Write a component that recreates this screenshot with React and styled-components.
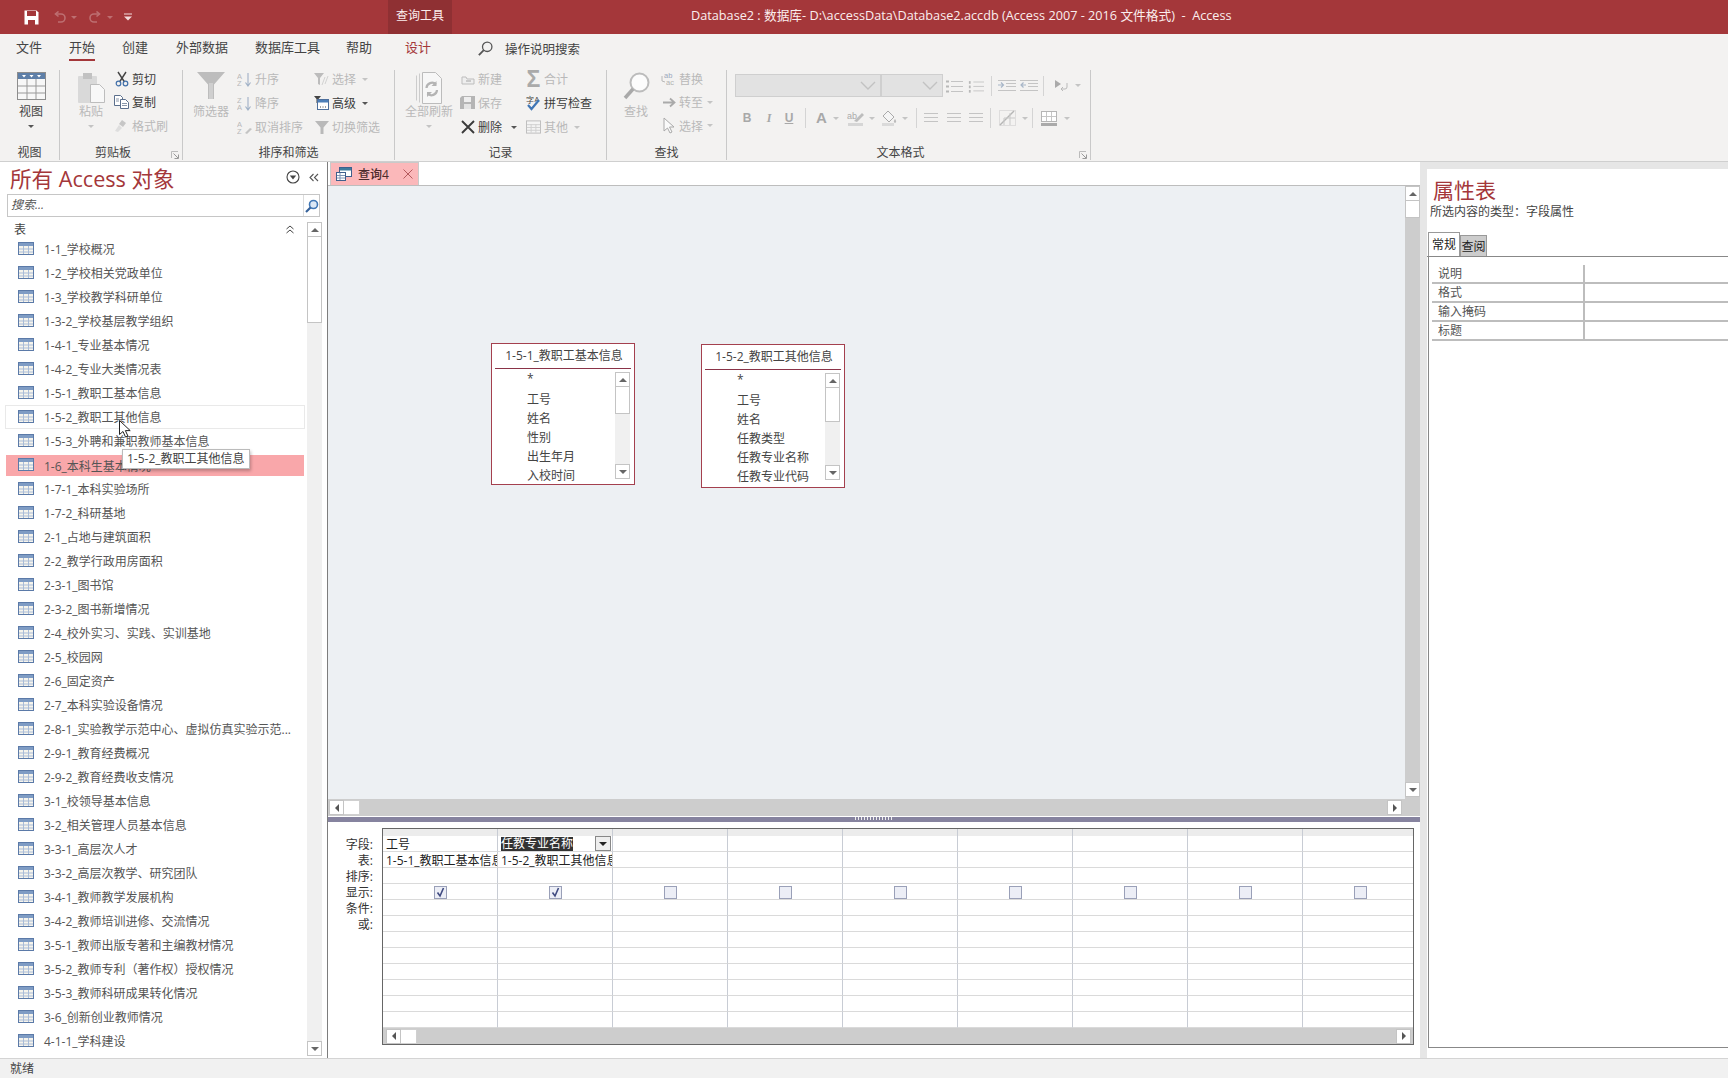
import React from 'react';
import styled, { createGlobalStyle } from 'styled-components';

const GlobalStyle = createGlobalStyle`
  html, body { margin: 0; padding: 0; background: #fff; }
  body { font-family: "Open Sans", "Noto Sans CJK SC", sans-serif; font-size: 12px; color: #444; }
  * { box-sizing: border-box; }
`;

const tables = [
  '1-1_学校概况', '1-2_学校相关党政单位', '1-3_学校教学科研单位', '1-3-2_学校基层教学组织', '1-4-1_专业基本情况',
  '1-4-2_专业大类情况表', '1-5-1_教职工基本信息', '1-5-2_教职工其他信息', '1-5-3_外聘和兼职教师基本信息', '1-6_本科生基本情况',
  '1-7-1_本科实验场所', '1-7-2_科研基地', '2-1_占地与建筑面积', '2-2_教学行政用房面积', '2-3-1_图书馆', '2-3-2_图书新增情况',
  '2-4_校外实习、实践、实训基地', '2-5_校园网', '2-6_固定资产', '2-7_本科实验设备情况', '2-8-1_实验教学示范中心、虚拟仿真实验示范...',
  '2-9-1_教育经费概况', '2-9-2_教育经费收支情况', '3-1_校领导基本信息', '3-2_相关管理人员基本信息', '3-3-1_高层次人才',
  '3-3-2_高层次教学、研究团队', '3-4-1_教师教学发展机构', '3-4-2_教师培训进修、交流情况', '3-5-1_教师出版专著和主编教材情况',
  '3-5-2_教师专利\uff08著作权\uff09授权情况', '3-5-3_教师科研成果转化情况', '3-6_创新创业教师情况', '4-1-1_学科建设',
];

const gray = '#b9b9b9';

/* page */
const Page = styled.div`
  width: 1728px; height: 1080px; display: flex; flex-direction: column; overflow: hidden; background: #fff;
`;

/* title bar */
const TitleBar = styled.div`
  height: 34px; background: #a4373a; display: flex; align-items: center; color: #fbeeee; flex: none;
`;
const Qat = styled.div`
  width: 388px; display: flex; align-items: center; padding-left: 24px;
`;
const QatSlot = styled.span`
  display: inline-flex; align-items: center; margin-right: ${p => p.$mr || 0}px;
`;
const ContextTab = styled.div`
  width: 64px; height: 34px; background: #8f3033; display: flex; align-items: center; justify-content: center; font-size: 12px; padding-bottom: 5px;
`;
const WindowTitle = styled.div`
  margin-left: 239px; font-size: 12.7px; white-space: pre; padding-bottom: 5px;
`;

/* ribbon */
const TabRow = styled.div`
  height: 28px; background: #f3f2f1; display: flex; flex: none; padding-left: 16px;
`;
const RibbonTab = styled.div`
  height: 28px; margin-right: ${p => p.$mr}px; font-size: 13px; line-height: 27px; position: relative;
  color: ${p => (p.$accent ? '#a4373a' : '#444')};
  &::after {
    content: ''; display: ${p => (p.$on ? 'block' : 'none')}; position: absolute; left: 0; right: 0; bottom: 1px; height: 2px; background: #a4373a;
  }
`;
const SearchHint = styled.div`
  display: flex; align-items: center; gap: 12px; height: 28px; font-size: 12.5px; color: #444;
`;
const RibbonBody = styled.div`
  height: 100px; background: #f3f2f1; border-bottom: 1px solid #cfcfcf; display: flex; flex: none; padding-top: 8px;
`;
const Group = styled.div`
  width: ${p => p.$w}px; height: 90px; border-right: 1px solid #c9c9c9; display: flex; flex-direction: column; position: relative; flex: none;
`;
const GroupBody = styled.div`
  height: 75px; display: flex; padding-left: ${p => p.$pl}px;
`;
const GroupLabel = styled.div`
  text-align: center; height: 15px; line-height: 15px; font-size: 12px; color: #444; padding-right: ${p => p.$shift || 0}px;
`;
const Launcher = styled.span`
  position: absolute; right: 3px; bottom: 1px; line-height: 0;
`;
const BigButton = styled.div`
  width: ${p => p.$w}px; display: flex; flex-direction: column; align-items: center; color: ${p => (p.$off ? gray : '#444')}; flex: none;
`;
const BigIcon = styled.div`
  height: 34px; padding-top: 2px; line-height: 0;
`;
const BigText = styled.div`
  height: 16px; line-height: 16px; white-space: nowrap; font-size: 12px;
`;
const Caret = styled.i`
  display: inline-block; width: 0; height: 0; flex: none;
  border-left: 3px solid transparent; border-right: 3px solid transparent;
  border-top: 3px solid ${p => p.$c || '#777'};
  margin: ${p => p.$m || '0'};
`;
const SmallCol = styled.div`
  width: ${p => p.$w}px; margin-left: ${p => p.$ml || 0}px; margin-top: -3px; flex: none;
`;
const SmallRow = styled.div`
  height: ${p => p.$h || 24}px; display: flex; align-items: center; color: ${p => (p.$off ? gray : '#3c3c3c')}; white-space: nowrap;
`;
const SmallIcon = styled.span`
  width: 15px; margin-right: 3px; display: flex; justify-content: center; line-height: 0; flex: none;
`;
const SumGlyph = styled.span`
  font-family: "Liberation Sans", sans-serif; font-size: 23px; line-height: 14px; font-weight: 700; color: #aaa;
`;
const FormatBody = styled.div`
  padding: 4px 0 0 8px; height: 75px;
`;
const ToolRow = styled.div`
  display: flex; align-items: center; height: ${p => p.$h}px; margin-bottom: ${p => p.$mb || 0}px;
`;
const Combo = styled.div`
  width: ${p => p.$w}px; height: 23px; background: #e2e2e2; border: 1px solid #cfcfcf; display: flex; align-items: center; justify-content: flex-end; padding-right: 4px; flex: none;
`;
const Tool = styled.span`
  width: ${p => p.$w}px; margin-left: ${p => p.$ml || 0}px; display: flex; justify-content: center; align-items: center; line-height: 0; flex: none;
`;
const FontGlyph = styled.span`
  font-family: ${p => (p.$serif ? '"Liberation Serif"' : '"Liberation Sans"')}; font-size: ${p => p.$size || 12}px; line-height: 14px;
  font-weight: 700; font-style: ${p => (p.$i ? 'italic' : 'normal')}; text-decoration: ${p => (p.$u ? 'underline' : 'none')}; color: #a8a8a8;
`;
const ToolSep = styled.span`
  width: 1px; height: 20px; background: #d4d4d4; margin-left: ${p => p.$ml}px; flex: none;
`;

/* main area */
const Main = styled.div`
  height: 896px; display: flex; flex: none;
`;

/* navigation pane */
const Nav = styled.div`
  width: 328px; border-right: 1px solid #7d7d7d; position: relative; flex: none; background: #fff;
`;
const NavHead = styled.div`
  height: 32px; display: flex; align-items: center; padding: 0 8px 2px 10px; gap: 9px;
`;
const NavTitle = styled.div`
  flex: 1; font-size: 21.6px; color: #a4373a; white-space: nowrap;
`;
const NavSearch = styled.div`
  height: 23px; margin: 0 7px; border: 1px solid #c6c6c6; display: flex; align-items: center; padding: 0 0 0 3px; font-style: italic; color: #555;
`;
const SearchText = styled.span` flex: 1; padding-bottom: 3px; `;
const SearchBtn = styled.span`
  width: 16px; height: 21px; border-left: 1px solid #dcdcdc; display: flex; align-items: center; justify-content: center;
`;
const NavBody = styled.div`
  display: flex; margin-top: 5px; height: 836px;
`;
const NavList = styled.div`
  width: 307px; flex: none;
`;
const SectionHead = styled.div`
  height: 15px; line-height: 15px; padding: 0 13px 0 14px; display: flex; justify-content: space-between; align-items: center; color: #444;
`;
const Row = styled.div`
  height: 24px; width: 300px; margin-left: 5px; display: flex; align-items: center; padding-left: 12px; gap: 10px; white-space: nowrap; color: #555;
  border: 1px solid ${p => (p.$hover ? '#e9e9e9' : 'transparent')};
  border-top-width: ${p => (p.$sel ? '2px' : '1px')};
  background: ${p => (p.$sel ? '#f9a7aa' : 'transparent')};
  background-clip: padding-box;
  svg { margin-top: -2px; }
`;
const Tip = styled.div`
  position: absolute; left: 122px; top: 287px; height: 20px; line-height: 17px; padding: 0 4px; background: #fff; border: 1px solid #bbb;
  box-shadow: 1px 2px 3px rgba(0,0,0,.25); color: #444; white-space: nowrap;
`;
const Pointer = styled.span`
  position: absolute; left: 119px; top: 258px; line-height: 0;
`;

/* scrollbars */
const VBar = styled.div`
  width: ${p => p.$w || 15}px; height: ${p => p.$h ? `${p.$h}px` : 'auto'}; background: ${p => p.$track || '#f0f0f0'}; display: flex; flex-direction: column; justify-content: space-between; flex: none;
  margin-top: ${p => p.$mt || 0}px;
`;
const ScrollTop = styled.div` display: flex; flex-direction: column; `;
const ArrowBtn = styled.div`
  width: ${p => p.$w || 15}px; height: ${p => p.$h || 15}px; background: #fff; border: 1px solid #c4c4c4; display: flex; align-items: center; justify-content: center; flex: none;
`;
const Up = styled.i`
  width: 0; height: 0; border-left: 4px solid transparent; border-right: 4px solid transparent; border-bottom: 4px solid #666;
`;
const Down = styled.i`
  width: 0; height: 0; border-left: 4px solid transparent; border-right: 4px solid transparent; border-top: 4px solid ${p => p.$c || '#666'};
`;
const LeftTri = styled.i`
  width: 0; height: 0; border-top: 4px solid transparent; border-bottom: 4px solid transparent; border-right: 4px solid #555;
`;
const RightTri = styled.i`
  width: 0; height: 0; border-top: 4px solid transparent; border-bottom: 4px solid transparent; border-left: 4px solid #555;
`;
const VThumb = styled.div`
  height: ${p => p.$h}px; background: #fff; border: 1px solid #c4c4c4; border-top: none;
`;
const HBar = styled.div`
  height: ${p => p.$h}px; background: #cdcdcd; display: flex; justify-content: space-between; align-items: center; padding: ${p => p.$pad || '0'}; flex: none;
`;
const HLeft = styled.div` display: flex; `;
const HThumb = styled.div`
  width: 16px; height: 15px; background: #fff; border: 1px solid #d0d0d0; border-left: none;
`;

/* document */
const Doc = styled.div`
  width: 1092px; display: flex; flex-direction: column; flex: none;
`;
const DocTabs = styled.div`
  height: 24px; border-bottom: 1px solid #bdbdbd; padding-left: 2px; flex: none;
`;
const DocTab = styled.div`
  width: 89px; height: 23px; background: #fbb8ba; border: 1px solid #c9c9c9; border-bottom: none; display: flex; align-items: center; padding: 0 5px; color: #4a2a2a;
`;
const DocTabName = styled.span` flex: 1; margin-left: 6px; font-weight: 500; `;
const Upper = styled.div`
  height: 630px; display: flex; flex-direction: column; flex: none;
`;
const UpperTop = styled.div`
  height: 613px; display: flex; flex: none; background: #cdcdcd;
`;
const Canvas = styled.div`
  flex: 1; position: relative; background: #edf0f3;
`;
const FieldList = styled.div`
  position: absolute; left: ${p => p.$x}px; top: ${p => p.$y}px; width: 144px; height: ${p => p.$h}px;
  background: #fff; border: 1px solid #a4404e; overflow: hidden;
`;
const FieldHead = styled.div`
  height: 25px; margin: 0 3px; border-bottom: 1px solid #8a3348; text-align: center; line-height: 23px; color: #444; padding-left: 2px; white-space: nowrap;
`;
const FieldBody = styled.div`
  display: flex; height: 118px;
`;
const FieldItems = styled.div`
  width: 123px; padding: 0 0 0 35px; flex: none;
`;
const FieldItem = styled.div`
  height: 19px; line-height: 19px; color: #444; white-space: nowrap; margin-bottom: ${p => p.$mb || 0}px;
`;
const Splitter = styled.div`
  height: 6px; background: #86839f; border-top: 1px solid #fff; flex: none; display: flex; justify-content: center;
`;
const Dots = styled.div`
  width: 38px; height: 3px; background: repeating-linear-gradient(90deg, #eee 0 1px, transparent 1px 3px);
`;
const Lower = styled.div`
  flex: 1; display: flex; background: #fff;
`;
const RowLabels = styled.div`
  width: 54px; padding: 15px 9px 0 0; text-align: right; flex: none;
`;
const RowLabel = styled.div`
  height: 16px; line-height: 16px; color: #333;
`;
const DesignGrid = styled.div`
  width: 1032px; height: 217px; margin-top: 6px; border: 1px solid #666; overflow: hidden; display: flex; flex-direction: column; flex: none;
`;
const Selector = styled.div`
  height: 7px; background: #ececec; display: grid; grid-template-columns: repeat(9, 115px); flex: none;
`;
const SelectorCell = styled.div` border-right: 1px solid #c8ccd4; `;
const Cells = styled.div`
  display: grid; grid-template-columns: repeat(9, 115px); grid-auto-rows: 16px; height: 192px; flex: none;
`;
const Cell = styled.div`
  border-right: 1px solid #c8ccd4; border-bottom: 1px solid #dadada; padding: 1px 0 0 ${p => p.$pl ?? 3}px; line-height: 15px; color: #222; white-space: nowrap; overflow: hidden;
  display: flex; align-items: center; justify-content: ${p => (p.$center ? 'center' : 'flex-start')}; font-size: 12px; position: relative;
`;
const Picked = styled.span`
  background: #333; color: #fff; line-height: 14px;
`;
const DropBtn = styled.span`
  position: absolute; right: 1px; top: 0; width: 16px; height: 15px; background: #eee; border: 1px solid #888; display: flex; align-items: center; justify-content: center;
`;
const Check = styled.span`
  width: 13px; height: 13px; border: 1px solid #9aa0b8; background: #eceef6; display: flex; align-items: center; justify-content: center; line-height: 0;
`;

/* property sheet */
const Sheet = styled.div`
  flex: 1; background: #e6e6e6; padding: 7px 0 0 7px; display: flex;
`;
const SheetInner = styled.div`
  flex: 1; background: #fff; display: flex; flex-direction: column;
`;
const SheetTitle = styled.div`
  font-size: 21px; line-height: 28px; color: #a4373a; padding: 7px 0 0 6px;
`;
const SheetType = styled.div`
  line-height: 16px; padding-left: 3px; color: #444;
`;
const SheetTabs = styled.div`
  display: flex; align-items: flex-end; height: 24px; margin-top: 13px; border-bottom: 1px solid #888; padding-left: 1px; flex: none;
`;
const SheetTab = styled.div`
  height: ${p => (p.$on ? 24 : 21)}px; width: ${p => (p.$on ? 32 : 27)}px; background: ${p => (p.$on ? '#fff' : '#ccc')};
  border: 1px solid #999; border-bottom: none; line-height: ${p => (p.$on ? 24 : 21)}px; text-align: center; color: #222;
`;
const SheetPane = styled.div`
  margin-left: 1px; height: 791px; border-left: 1px solid #888; border-bottom: 1px solid #888; padding: 8px 0 0 3px; flex: none;
`;
const PropRow = styled.div`
  height: 19px; display: flex; border-bottom: 2px solid #bdbdbd;
`;
const PropName = styled.div`
  width: 153px; padding-left: 6px; line-height: 17px; border-right: 2px solid #bdbdbd; color: #555;
`;

/* status */
const Status = styled.div`
  height: 20px; background: #f1f1f1; border-top: 1px solid #d4d4d4; line-height: 19px; padding-left: 10px; color: #444; flex: none;
`;

/* icons */
const Svg = ({ w, h, children }) => (
  <svg width={w} height={h} viewBox={`0 0 ${w} ${h}`} fill="none">{children}</svg>
);

const TableIcon = () => (
  <Svg w={16} h={13}>
    <rect x=".5" y=".5" width="15" height="12" fill="#f6f4ec" stroke="#5b7aa8" />
    <rect x="1" y="1" width="14" height="3" fill="#7f9cc4" />
    <path d="M1 7h14M1 10h14M5.5 4v8M10.5 4v8" stroke="#a9bcd8" />
  </Svg>
);
const SaveIcon = () => (
  <Svg w={15} h={15}>
    <path d="M.5.5h12l2 2v12H.5z" fill="#fff" />
    <rect x="3" y="1" width="9" height="5" fill="#a4373a" />
    <rect x="4" y="10" width="7" height="5" fill="#a4373a" />
  </Svg>
);
const UndoIcon = ({ flip }) => (
  <Svg w={15} h={13}>
    <g transform={flip ? 'translate(15 0) scale(-1 1)' : undefined} stroke="#bd6f71" strokeWidth="1.6">
      <path d="M4 3h5a4 4 0 0 1 0 8H6" />
      <path d="M6.5 .5 3.5 3l3 2.5" />
    </g>
  </Svg>
);
const Customize = () => (
  <Svg w={8} h={8}>
    <path d="M0 1h8" stroke="#f3dcdc" />
    <path d="M0 3.5h8L4 7.5z" fill="#f3dcdc" />
  </Svg>
);
const Glass = ({ s = 14, c = '#555', sw = 1.2 }) => (
  <svg width={s} height={s} viewBox="0 0 14 14" fill="none">
    <circle cx="8.6" cy="5.4" r="4.4" stroke={c} strokeWidth={sw} />
    <path d="M5.4 8.6.8 13.2" stroke={c} strokeWidth={sw + .5} />
  </svg>
);
const ViewIcon = () => (
  <Svg w={29} h={28}>
    <rect x=".5" y=".5" width="28" height="27" fill="#f7f7f7" stroke="#8d8d8d" />
    <rect x="1" y="1" width="27" height="6" fill="#5e7fa8" />
    <path d="M5 3h4L7 5.5zM12.5 3h4l-2 2.5zM20 3h4l-2 2.5z" fill="#fff" />
    <path d="M1 14h27M1 21h27M10 7v20M19 7v20" stroke="#999" />
  </Svg>
);
const PasteIcon = () => (
  <Svg w={29} h={32}>
    <rect x="1" y="4" width="19" height="27" rx="1" fill="#d9d9d9" />
    <rect x="6" y="1" width="9" height="6" fill="#c2c2c2" />
    <path d="M13.5 12.5h9l5 5v13h-14z" fill="#f8f8f8" stroke="#bdbdbd" />
  </Svg>
);
const Scissors = () => (
  <Svg w={14} h={16}>
    <path d="M3 1l6.5 10M11 1 4.500 11" stroke="#444" strokeWidth="1.4" />
    <circle cx="3.500" cy="12.500" r="2.300" stroke="#3f6ea8" strokeWidth="1.200" />
    <circle cx="10.500" cy="12.500" r="2.300" stroke="#3f6ea8" strokeWidth="1.200" />
  </Svg>
);
const CopyIcon = () => (
  <Svg w={15} h={14}>
    <path d="M.5.5h6l2 2v8h-8z" fill="#fff" stroke="#5b6f8c" />
    <path d="M6.500 4.500h5l3 3v6h-8z" fill="#fff" stroke="#5b6f8c" />
    <path d="M8 8.500h5M8 10.500h5M2 4h3M2 6h3" stroke="#8a97aa" />
  </Svg>
);
const BrushIcon = () => (
  <Svg w={15} h={14}>
    <path d="M8 1l4 3-3 4-4-3z" fill="#c6c6c6" />
    <path d="M5 6l3 3-4 4-3-1z" fill="#dedede" />
  </Svg>
);
const Funnel = ({ w = 14, h = 13, c = gray }) => (
  <svg width={w} height={h} viewBox="0 0 14 13">
    <path d="M0 0h14L8.500 6.500V13h-3V6.500z" fill={c} />
  </svg>
);
const BigFunnel = () => (
  <Svg w={28} h={27}>
    <path d="M0 0h28L17 12.500V27h-6V12.500z" fill="#bdbdbd" />
    <path d="M12 11h4v16h-4z" fill="#cfcfcf" />
  </Svg>
);
const SortIcon = ({ top, bottom, off }) => (
  <Svg w={15} h={15}>
    <text x="0" y="7" fontSize="7.500" fill={gray} fontFamily="Liberation Sans">{top}</text>
    <text x="0" y="14" fontSize="7.500" fill={gray} fontFamily="Liberation Sans">{bottom}</text>
    {off
      ? <path d="M8 13l5-5 2 1-5 5z" fill="#c4c4c4" />
      : <path d="M11 1v12M8.500 10.500 11 14l2.500-3.500" stroke="#9fb0c6" strokeWidth="1.100" />}
  </Svg>
);
const SelectFilter = () => (
  <Svg w={15} h={13}>
    <path d="M0 0h10L6 5v7l-2-1V5z" fill="#bcbcbc" />
    <path d="M11 4l-3 8M14 3l-3 8" stroke="#d2d2d2" />
  </Svg>
);
const AdvFilter = () => (
  <Svg w={15} h={14}>
    <path d="M0 0h7L4.500 3v4h-2V3z" fill="#444" />
    <rect x="3.500" y="3.500" width="11" height="10" fill="#fff" stroke="#4d6f9c" />
    <rect x="4" y="4" width="10" height="2.500" fill="#4d7fb8" />
    <path d="M6 11h1M8.500 11h1M11 11h1" stroke="#444" />
  </Svg>
);
const RefreshDoc = () => (
  <Svg w={26} h={32}>
    <path d="M.5 3.500v25" stroke="#ccc" />
    <path d="M3.500 1.500v29" stroke="#ccc" />
    <path d="M6.500.5h13l6 6v25h-19z" fill="#f7f7f7" stroke="#bcbcbc" />
    <path d="M10.500 16a5.500 5.500 0 0 1 9.500-3.500M21 18a5.500 5.500 0 0 1-9.500 3.500" stroke="#b4b4b4" strokeWidth="2.200" />
    <path d="M20.500 9v5h-5zM11 25v-5h5z" fill="#b4b4b4" />
  </Svg>
);
const NewIcon = () => (
  <Svg w={14} h={11}>
    <path d="M1 3v7h12V5H6L5 3z" fill="#eee" stroke="#bdbdbd" />
    <path d="M5 7h5" stroke="#bdbdbd" strokeWidth="1.500" />
  </Svg>
);
const FloppyIcon = () => (
  <Svg w={15} h={14}>
    <path d="M2 0h13v13H0V2z" fill="#b5b5b5" />
    <rect x="4" y="1" width="7" height="5" fill="#eee" />
    <rect x="4" y="8" width="7" height="5" fill="#e4e4e4" />
  </Svg>
);
const Cross = () => (
  <Svg w={14} h={14}>
    <path d="M1 1l12 12M13 1 1 13" stroke="#3b3b3b" strokeWidth="1.900" />
  </Svg>
);
const SpellIcon = () => (
  <Svg w={15} h={16}>
    <text x="0" y="7.500" fontSize="8" fill="#444" fontFamily="Noto Sans CJK SC">字</text>
    <text x="8.500" y="7" fontSize="7" fill="#444" fontFamily="Liberation Sans">A</text>
    <path d="M2 10l3.500 4L13 5" stroke="#3f76b5" strokeWidth="2.200" />
  </Svg>
);
const OtherIcon = () => (
  <Svg w={16} h={14}>
    <rect x=".5" y=".5" width="15" height="13" fill="#f4f4f4" stroke="#bcbcbc" />
    <path d="M1 4.500h14M1 7.500h14M1 10.500h14M5.500 4v9M10.500 4v9" stroke="#cfcfcf" />
  </Svg>
);
const BigGlass = () => (
  <Svg w={27} h={28}>
    <circle cx="16.500" cy="10.500" r="9" stroke="#bcbcbc" strokeWidth="2" fill="#fcfcfc" />
    <path d="M10 17 2 26" stroke="#a9a9a9" strokeWidth="3.500" />
  </Svg>
);
const ReplaceIcon = () => (
  <Svg w={15} h={15}>
    <text x="3" y="6.500" fontSize="7.500" fill="#9aa9bd" fontFamily="Liberation Sans">ab</text>
    <text x="5" y="14" fontSize="7.500" fill="#b2b2b2" fontFamily="Liberation Sans">ac</text>
    <path d="M1 5v5l3 1" stroke="#b8b8b8" />
  </Svg>
);
const GotoIcon = () => (
  <Svg w={14} h={11}>
    <path d="M1 5.500h11M8 1.500l4.500 4L8 9.500" stroke="#aaa" strokeWidth="1.800" />
  </Svg>
);
const ArrowSelect = () => (
  <Svg w={12} h={17}>
    <path d="M1 1v13l3.500-3 2.500 5 2-1-2.500-5h4.500z" fill="#fafafa" stroke="#aaa" />
  </Svg>
);
const Launch = () => (
  <Svg w={8} h={8}>
    <path d="M.5 7V.5H7" stroke="#bbb" />
    <path d="M2.500 2.500l4.500 4.500M7.500 3.500v4h-4" stroke="#999" />
  </Svg>
);
const Lines = ({ w, rows, x = 0, c = '#c4c4c4' }) => (
  <svg width={w} height="13" viewBox={`0 0 ${w} 13`}>
    {rows.map(y => <path key={y} d={`M${x} ${y}.5H${w}`} stroke={c} />)}
  </svg>
);
const ListIcon = ({ numbered }) => (
  <Svg w={18} h={14}>
    {[1.5, 6.5, 11.5].map(y => <rect key={y} x="1" y={y} width={numbered ? 2 : 3} height={numbered ? 3 : 2} fill="#b8b8b8" />)}
    {[2.5, 7.5, 12.5].map(y => <path key={y} d={`M6 ${y}H18`} stroke="#c4c4c4" />)}
  </Svg>
);
const IndentIcon = ({ back }) => (
  <Svg w={18} h={13}>
    <path d="M0 1.500h18M8 4.500h10M8 7.500h10M0 11.500h18" stroke="#c4c4c4" />
    <path d={back ? 'M6 6H1M3.500 3.500 1 6l2.500 2.500' : 'M0 6h5M3 3.500 5.500 6 3 8.500'} stroke="#a8b6c8" strokeWidth="1.200" />
  </Svg>
);
const RtlIcon = () => (
  <Svg w={14} h={13}>
    <path d="M1 1l6 4-6 4z" fill="#aaa" />
    <path d="M13 4v4a2 2 0 0 1-2 2H7M9 8l-2 2 2 2" stroke="#b9b9b9" />
  </Svg>
);
const HighlightIcon = () => (
  <Svg w={18} h={15}>
    <text x="0" y="8" fontSize="9" fill="#aaa" fontFamily="Liberation Sans">ab</text>
    <path d="M7 10 15 2l2 2-7 7z" fill="#bdbdbd" />
    <rect x="1" y="12" width="15" height="3" fill="#d6d6d6" />
  </Svg>
);
const FillIcon = () => (
  <Svg w={18} h={16}>
    <path d="M8 1l6 6-5 5-6-6z" fill="#f5f5f5" stroke="#aaa" />
    <path d="M15 9c1 1.500 2 3 0 4-2-1-1-2.500 0-4z" fill="#bbb" />
    <rect x="2" y="13" width="12" height="3" fill="#dadada" />
  </Svg>
);
const DiagIcon = () => (
  <Svg w={17} h={16}>
    <path d="M.5.500h16v15H.5z" stroke="#c9c9c9" strokeDasharray="1 1" />
    <path d="M1 15 15 1" stroke="#b5b5b5" strokeWidth="1.500" />
    <path d="M5 15V8h11M11 15V3" stroke="#c9c9c9" />
  </Svg>
);
const CellsIcon = () => (
  <Svg w={16} h={15}>
    <rect x=".5" y=".5" width="15" height="10" fill="#fff" stroke="#b5b5b5" />
    <path d="M1 5.500h14M5.500 1v9M10.500 1v9" stroke="#c6c6c6" />
    <rect y="12" width="16" height="3" fill="#aaa" />
  </Svg>
);
const TabQueryIcon = () => (
  <Svg w={16} h={14}>
    <rect x="3.500" y=".5" width="12" height="9" fill="#fff" stroke="#3f5f8c" />
    <rect x="4" y="1" width="11" height="2.500" fill="#3f7a9c" />
    <rect x=".5" y="5.500" width="9" height="8" fill="#fff" stroke="#3f5f8c" />
    <path d="M1 8.500h8M1 11h8M4 6v7" stroke="#7f94b5" />
  </Svg>
);
const CloseX = () => (
  <Svg w={10} h={10}>
    <path d="M.5.5l9 9M9.500.5l-9 9" stroke="#b45a5d" />
  </Svg>
);
const NavMenu = () => (
  <Svg w={14} h={14}>
    <circle cx="7" cy="7" r="6" stroke="#444" strokeWidth="1.100" />
    <path d="M3.800 5.500h6.400L7 9.500z" fill="#444" />
  </Svg>
);
const Collapse = () => (
  <Svg w={10} h={9}>
    <path d="M4.500 1 1 4.500 4.500 8M9 1 5.500 4.500 9 8" stroke="#555" strokeWidth="1.100" />
  </Svg>
);
const FoldUp = () => (
  <Svg w={8} h={9}>
    <path d="M.5 4 4 1l3.500 3M.5 8 4 5l3.500 3" stroke="#444" />
  </Svg>
);
const SearchBlue = () => (
  <Svg w={14} h={14}>
    <circle cx="8.500" cy="5.500" r="4" stroke="#3f76b5" strokeWidth="1.600" fill="#dbe7f5" />
    <path d="M5.500 8.500 1 13" stroke="#35619a" strokeWidth="2.200" />
  </Svg>
);
const CursorArrow = () => (
  <Svg w={12} h={18}>
    <path d="M.5.5v14l3.500-3 2.500 5.500 2.400-1-2.500-5.400h4.800z" fill="#fff" stroke="#222" />
  </Svg>
);
const Tick = () => (
  <Svg w={11} h={11}>
    <path d="M2.500 5.500 5 9l3.500-8" stroke="#3f4a80" strokeWidth="1.600" />
  </Svg>
);
const ComboArrow = () => (
  <Svg w={16} h={9}>
    <path d="M1 1l7 7 7-7" stroke="#c2c2c2" strokeWidth="1.400" />
  </Svg>
);

const Small = ({ icon, text, off, h, caret, caretM }) => (
  <SmallRow $off={off} $h={h}>
    <SmallIcon>{icon}</SmallIcon>
    {text}
    {caret && <Caret $c={off ? '#c4c4c4' : '#555'} $m={caretM || '0 0 0 6px'} />}
  </SmallRow>
);

const ScrollV = ({ thumb, h, mt, track }) => (
  <VBar $h={h} $mt={mt} $track={track}>
    <ScrollTop>
      <ArrowBtn><Up /></ArrowBtn>
      <VThumb $h={thumb} />
    </ScrollTop>
    <ArrowBtn><Down /></ArrowBtn>
  </VBar>
);

const FieldWindow = ({ x, y, h, name, fields, thumb }) => (
  <FieldList $x={x} $y={y} $h={h}>
    <FieldHead>{name}</FieldHead>
    <FieldBody>
      <FieldItems>
        <FieldItem $mb={2}>*</FieldItem>
        {fields.map(f => <FieldItem key={f}>{f}</FieldItem>)}
      </FieldItems>
      <ScrollV thumb={thumb} h={107} mt={3} />
    </FieldBody>
  </FieldList>
);

const gridRows = 12;
const gridCols = 9;

const App = () => {
  const cells = [];
  for (let r = 0; r < gridRows; r++) {
    for (let c = 0; c < gridCols; c++) {
      let content = null;
      if (r === 0 && c === 0) content = '工号';
      if (r === 0 && c === 1) content = <><Picked>任教专业名称</Picked><DropBtn><Down $c="#222" /></DropBtn></>;
      if (r === 1 && c === 0) content = '1-5-1_教职工基本信息';
      if (r === 1 && c === 1) content = '1-5-2_教职工其他信息';
      if (r === 3) content = <Check>{c < 2 && <Tick />}</Check>;
      cells.push(<Cell key={`${r}-${c}`} $center={r === 3} $pl={r === 3 ? 0 : 3}>{content}</Cell>);
    }
  }

  return (
    <Page>
      <GlobalStyle />
      <TitleBar>
        <Qat>
          <QatSlot $mr={13}><SaveIcon /></QatSlot>
          <QatSlot $mr={4}><UndoIcon /></QatSlot>
          <QatSlot $mr={11}><Caret $c="#bd6f71" /></QatSlot>
          <QatSlot $mr={4}><UndoIcon flip /></QatSlot>
          <QatSlot $mr={11}><Caret $c="#bd6f71" /></QatSlot>
          <Customize />
        </Qat>
        <ContextTab>查询工具</ContextTab>
        <WindowTitle>{'Database2 : 数据库- D:\\accessData\\Database2.accdb (Access 2007 - 2016 文件格式)  -  Access'}</WindowTitle>
      </TitleBar>

      <TabRow>
        <RibbonTab $mr={27}>文件</RibbonTab>
        <RibbonTab $mr={27} $on>开始</RibbonTab>
        <RibbonTab $mr={28}>创建</RibbonTab>
        <RibbonTab $mr={27}>外部数据</RibbonTab>
        <RibbonTab $mr={26}>数据库工具</RibbonTab>
        <RibbonTab $mr={33}>帮助</RibbonTab>
        <RibbonTab $mr={47} $accent>设计</RibbonTab>
        <SearchHint><Glass s={15} />操作说明搜索</SearchHint>
      </TabRow>

      <RibbonBody>
        <Group $w={60}>
          <GroupBody $pl={2}>
            <BigButton $w={58}>
              <BigIcon><ViewIcon /></BigIcon>
              <BigText>视图</BigText>
              <Caret $m="5px 0 0" $c="#555" />
            </BigButton>
          </GroupBody>
          <GroupLabel>视图</GroupLabel>
        </Group>

        <Group $w={123}>
          <GroupBody $pl={14}>
            <BigButton $w={34} $off>
              <BigIcon><PasteIcon /></BigIcon>
              <BigText>粘贴</BigText>
              <Caret $m="5px 0 0" $c="#c4c4c4" />
            </BigButton>
            <SmallCol $w={70} $ml={6}>
              <Small h={23.5} icon={<Scissors />} text="剪切" />
              <Small h={23.5} icon={<CopyIcon />} text="复制" />
              <Small h={23.5} icon={<BrushIcon />} text="格式刷" off />
            </SmallCol>
          </GroupBody>
          <GroupLabel $shift={16}>剪贴板</GroupLabel>
          <Launcher><Launch /></Launcher>
        </Group>

        <Group $w={212}>
          <GroupBody $pl={10}>
            <BigButton $w={36} $off>
              <BigIcon><BigFunnel /></BigIcon>
              <BigText>筛选器</BigText>
            </BigButton>
            <SmallCol $w={77} $ml={8}>
              <Small icon={<SortIcon top="A" bottom="Z" />} text="升序" off />
              <Small icon={<SortIcon top="Z" bottom="A" />} text="降序" off />
              <Small icon={<SortIcon top="A" bottom="Z" off />} text="取消排序" off />
            </SmallCol>
            <SmallCol $w={70}>
              <Small icon={<SelectFilter />} text="选择" off caret />
              <Small icon={<AdvFilter />} text="高级" caret />
              <Small icon={<Funnel />} text="切换筛选" off />
            </SmallCol>
          </GroupBody>
          <GroupLabel>排序和筛选</GroupLabel>
        </Group>

        <Group $w={212}>
          <GroupBody $pl={8}>
            <BigButton $w={52} $off>
              <BigIcon><RefreshDoc /></BigIcon>
              <BigText>全部刷新</BigText>
              <Caret $m="5px 0 0" $c="#c4c4c4" />
            </BigButton>
            <SmallCol $w={66} $ml={5}>
              <Small icon={<NewIcon />} text="新建" off />
              <Small icon={<FloppyIcon />} text="保存" off />
              <Small icon={<Cross />} text="删除" caret caretM="0 0 0 9px" />
            </SmallCol>
            <SmallCol $w={70}>
              <Small icon={<SumGlyph>Σ</SumGlyph>} text="合计" off />
              <Small icon={<SpellIcon />} text="拼写检查" />
              <Small icon={<OtherIcon />} text="其他" off caret />
            </SmallCol>
          </GroupBody>
          <GroupLabel>记录</GroupLabel>
        </Group>

        <Group $w={120}>
          <GroupBody $pl={14}>
            <BigButton $w={30} $off>
              <BigIcon><BigGlass /></BigIcon>
              <BigText>查找</BigText>
            </BigButton>
            <SmallCol $w={62} $ml={10}>
              <Small h={23.5} icon={<ReplaceIcon />} text="替换" off />
              <Small h={23.5} icon={<GotoIcon />} text="转至" off caret caretM="0 0 0 4px" />
              <Small h={23.5} icon={<ArrowSelect />} text="选择" off caret caretM="0 0 0 4px" />
            </SmallCol>
          </GroupBody>
          <GroupLabel>查找</GroupLabel>
        </Group>

        <Group $w={364}>
          <FormatBody>
            <ToolRow $h={23} $mb={11}>
              <Combo $w={146}><ComboArrow /></Combo>
              <Combo $w={62}><ComboArrow /></Combo>
              <Tool $w={19} $ml={1}><ListIcon /></Tool>
              <Tool $w={16} $ml={5}><ListIcon numbered /></Tool>
              <ToolSep $ml={7} />
              <Tool $w={18} $ml={6}><IndentIcon /></Tool>
              <Tool $w={18} $ml={4}><IndentIcon back /></Tool>
              <ToolSep $ml={5} />
              <Tool $w={14} $ml={10}><RtlIcon /></Tool>
              <Caret $c="#c4c4c4" $m="0 0 0 7px" />
            </ToolRow>
            <ToolRow $h={20}>
              <Tool $w={10} $ml={7}><FontGlyph>B</FontGlyph></Tool>
              <Tool $w={10} $ml={12}><FontGlyph $serif $i>I</FontGlyph></Tool>
              <Tool $w={10} $ml={10}><FontGlyph $u>U</FontGlyph></Tool>
              <ToolSep $ml={11} />
              <Tool $w={11} $ml={10}><FontGlyph $size={15}>A</FontGlyph></Tool>
              <Caret $c="#c4c4c4" $m="0 0 0 6px" />
              <Tool $w={18} $ml={8}><HighlightIcon /></Tool>
              <Caret $c="#c4c4c4" $m="0 0 0 4px" />
              <Tool $w={18} $ml={5}><FillIcon /></Tool>
              <Caret $c="#c4c4c4" $m="0 0 0 4px" />
              <ToolSep $ml={8} />
              <Tool $w={14} $ml={7}><Lines w={14} rows={[1, 5, 9]} /></Tool>
              <Tool $w={14} $ml={9}><Lines w={14} rows={[1, 5, 9]} /></Tool>
              <Tool $w={14} $ml={8}><Lines w={14} rows={[1, 5, 9]} /></Tool>
              <ToolSep $ml={7} />
              <Tool $w={17} $ml={8}><DiagIcon /></Tool>
              <Caret $c="#c4c4c4" $m="0 0 0 6px" />
              <ToolSep $ml={4} />
              <Tool $w={16} $ml={8}><CellsIcon /></Tool>
              <Caret $c="#c4c4c4" $m="0 0 0 7px" />
            </ToolRow>
          </FormatBody>
          <GroupLabel $shift={16}>文本格式</GroupLabel>
          <Launcher><Launch /></Launcher>
        </Group>
      </RibbonBody>

      <Main>
        <Nav>
          <NavHead>
            <NavTitle>所有 Access 对象</NavTitle>
            <NavMenu />
            <Collapse />
          </NavHead>
          <NavSearch>
            <SearchText>搜索...</SearchText>
            <SearchBtn><SearchBlue /></SearchBtn>
          </NavSearch>
          <NavBody>
            <NavList>
              <SectionHead>表<FoldUp /></SectionHead>
              {tables.map(name => (
                <Row key={name} $hover={name.startsWith('1-5-2')} $sel={name.startsWith('1-6')}>
                  <TableIcon />
                  {name}
                </Row>
              ))}
            </NavList>
            <ScrollV thumb={86} h={834} />
          </NavBody>
          <Tip>1-5-2_教职工其他信息</Tip>
          <Pointer><CursorArrow /></Pointer>
        </Nav>

        <Doc>
          <DocTabs>
            <DocTab>
              <TabQueryIcon />
              <DocTabName>查询4</DocTabName>
              <CloseX />
            </DocTab>
          </DocTabs>
          <Upper>
            <UpperTop>
              <Canvas>
                <FieldWindow x={163} y={157} h={142} thumb={27} name="1-5-1_教职工基本信息"
                  fields={['工号', '姓名', '性别', '出生年月', '入校时间']} />
                <FieldWindow x={373} y={158} h={144} thumb={34} name="1-5-2_教职工其他信息"
                  fields={['工号', '姓名', '任教类型', '任教专业名称', '任教专业代码']} />
              </Canvas>
              <ScrollV thumb={17} h={611} track="#cdcdcd" />
            </UpperTop>
            <HBar $h={17} $pad="0 18px 0 1px">
              <HLeft>
                <ArrowBtn><LeftTri /></ArrowBtn>
                <HThumb />
              </HLeft>
              <ArrowBtn><RightTri /></ArrowBtn>
            </HBar>
          </Upper>
          <Splitter><Dots /></Splitter>
          <Lower>
            <RowLabels>
              {['字段:', '表:', '排序:', '显示:', '条件:', '或:'].map(t => <RowLabel key={t}>{t}</RowLabel>)}
            </RowLabels>
            <DesignGrid>
              <Selector>
                {Array.from({ length: gridCols }, (_, i) => <SelectorCell key={i} />)}
              </Selector>
              <Cells>{cells}</Cells>
              <HBar $h={16} $pad="0 2px 0 3px">
                <HLeft>
                  <ArrowBtn><LeftTri /></ArrowBtn>
                  <HThumb />
                </HLeft>
                <ArrowBtn><RightTri /></ArrowBtn>
              </HBar>
            </DesignGrid>
          </Lower>
        </Doc>

        <Sheet>
          <SheetInner>
            <SheetTitle>属性表</SheetTitle>
            <SheetType>{'所选内容的类型\uff1a字段属性'}</SheetType>
            <SheetTabs>
              <SheetTab $on>常规</SheetTab>
              <SheetTab>查阅</SheetTab>
            </SheetTabs>
            <SheetPane>
              {['说明', '格式', '输入掩码', '标题'].map(t => (
                <PropRow key={t}><PropName>{t}</PropName></PropRow>
              ))}
            </SheetPane>
          </SheetInner>
        </Sheet>
      </Main>

      <Status>就绪</Status>
    </Page>
  );
};

export default App;
